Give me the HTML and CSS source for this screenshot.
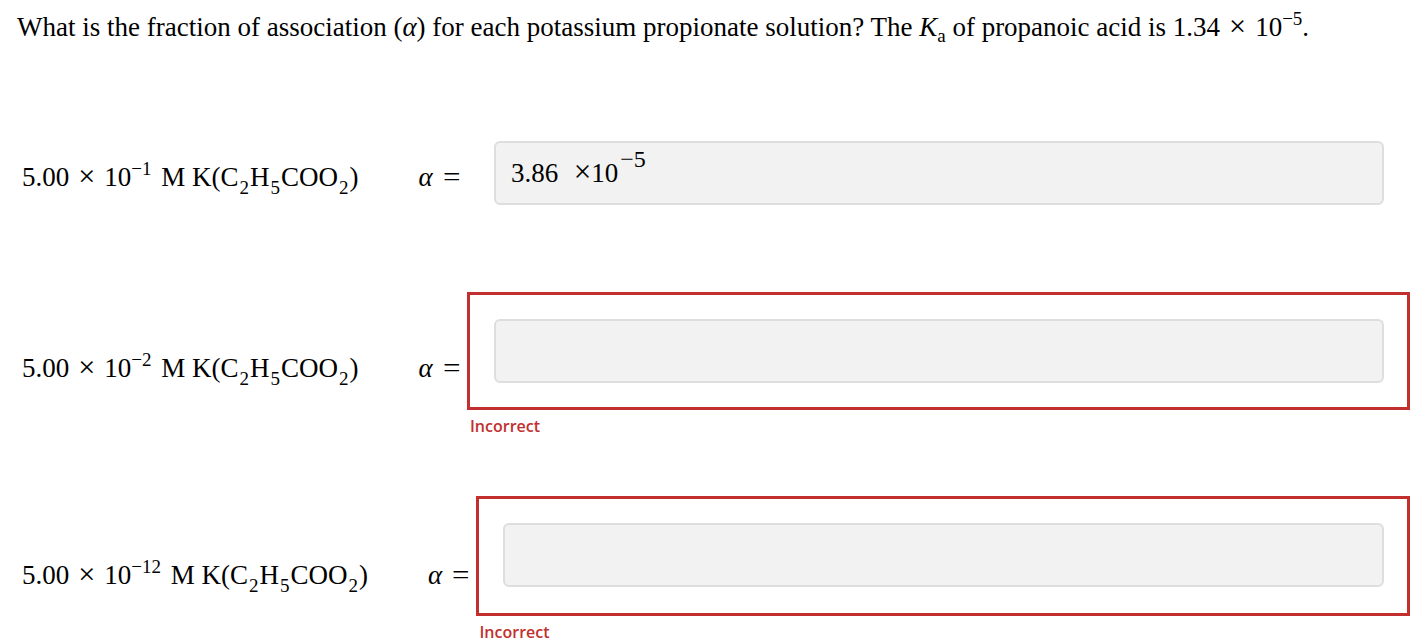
FILE: index.html
```html
<!DOCTYPE html>
<html lang="en">
<head>
<meta charset="utf-8">
<title>Fraction of association</title>
<link rel="stylesheet" href="styles.css">
</head>
<body>
<main class="question">
  <p class="prompt">What is the fraction of association (<i class="var">α</i>) for each potassium propionate solution? The <i class="var">K</i><sub class="sub-a">a</sub> of propanoic acid is 1.34<span class="times">×</span>10<sup class="exp">−5</sup>.</p>

  <div class="parts">
    <div class="part">
      <div class="label">5.00<span class="times">×</span>10<sup class="exp">−1</sup> M K(C<sub class="idx">2</sub>H<sub class="idx">5</sub>COO<sub class="idx">2</sub>)</div>
      <div class="alpha"><i class="var">α</i><span class="eq">=</span></div>
      <div class="answer">
        <div class="field">
          <div class="input">3.86&nbsp; <span class="x">×</span>10<sup class="pow">−5</sup></div>
        </div>
      </div>
    </div>

    <div class="part">
      <div class="label">5.00<span class="times">×</span>10<sup class="exp">−2</sup> M K(C<sub class="idx">2</sub>H<sub class="idx">5</sub>COO<sub class="idx">2</sub>)</div>
      <div class="alpha"><i class="var">α</i><span class="eq">=</span></div>
      <div class="answer">
        <div class="field field-wrong">
          <div class="input"></div>
        </div>
        <div class="feedback">Incorrect</div>
      </div>
    </div>

    <div class="part part-last">
      <div class="label">5.00<span class="times">×</span>10<sup class="exp">−12</sup> M K(C<sub class="idx">2</sub>H<sub class="idx">5</sub>COO<sub class="idx">2</sub>)</div>
      <div class="alpha"><i class="var">α</i><span class="eq">=</span></div>
      <div class="answer">
        <div class="field field-wrong">
          <div class="input"></div>
        </div>
        <div class="feedback">Incorrect</div>
      </div>
    </div>
  </div>
</main>
</body>
</html>
```

FILE: styles.css
```css
* {
  box-sizing: border-box;
}

html, body {
  margin: 0;
  padding: 0;
  background: #ffffff;
}

body {
  font-family: "Liberation Serif", "Times New Roman", serif;
  color: #000000;
  overflow: hidden;
}

.question {
  padding: 12px 8px 0 17px;
}

.prompt {
  margin: 0;
  font-size: 27px;
  line-height: 31px;
  white-space: nowrap;
}

.var {
  font-style: italic;
}

/* binary operator with math spacing */
.times {
  font-size: 1.12em;
  line-height: 0;
  margin: 0 9px;
}

.sub-a {
  font-size: 19px;
  vertical-align: -6px;
  line-height: 0;
}

.exp {
  font-size: 19px;
  vertical-align: 11px;
  line-height: 0;
}

.parts {
  display: flex;
  flex-direction: column;
  gap: 60px;
  margin-top: 71px;
}

.part {
  display: flex;
  align-items: center;
}

.label {
  font-size: 27px;
  line-height: 31px;
  white-space: nowrap;
  padding-left: 5px;
  margin-top: 8px;
}

.part-last .label,
.part-last .alpha {
  margin-top: 12px;
}

.label .exp {
  margin-right: 3px;
}

.idx {
  font-size: 19px;
  vertical-align: -8px;
  line-height: 0;
  margin: 0 1px;
}

.alpha {
  display: flex;
  align-items: baseline;
  gap: 10px;
  font-size: 27px;
  line-height: 31px;
  margin-left: 60px;
  margin-right: 7px;
  margin-top: 8px;
  white-space: nowrap;
}

.eq {
  display: inline-block;
  transform: scaleX(1.15);
  transform-origin: left center;
  padding-right: 2px;
}

.answer {
  flex: 1;
  display: flex;
  flex-direction: column;
}

.field {
  border: 3px solid transparent;
  padding: 24px 23px 24px 24px;
}

.field-wrong {
  border-color: #c1302e;
}

.part-last .field {
  padding-bottom: 26px;
}

.input {
  height: 64px;
  border: 2px solid #dedede;
  border-radius: 6px;
  background: #f2f2f2;
  padding: 0 15px;
  font-size: 27px;
  line-height: 60px;
  white-space: nowrap;
}

.x {
  font-size: 1.15em;
  line-height: 0;
  margin-left: 2px;
}

.pow {
  font-size: 24px;
  vertical-align: 15px;
  line-height: 0;
  margin-left: 2px;
}

.feedback {
  margin-top: 6px;
  padding-left: 3px;
  font-family: "Open Sans", "Noto Sans", sans-serif;
  font-weight: 600;
  font-size: 16px;
  line-height: 20px;
  color: #c1302e;
}
```
